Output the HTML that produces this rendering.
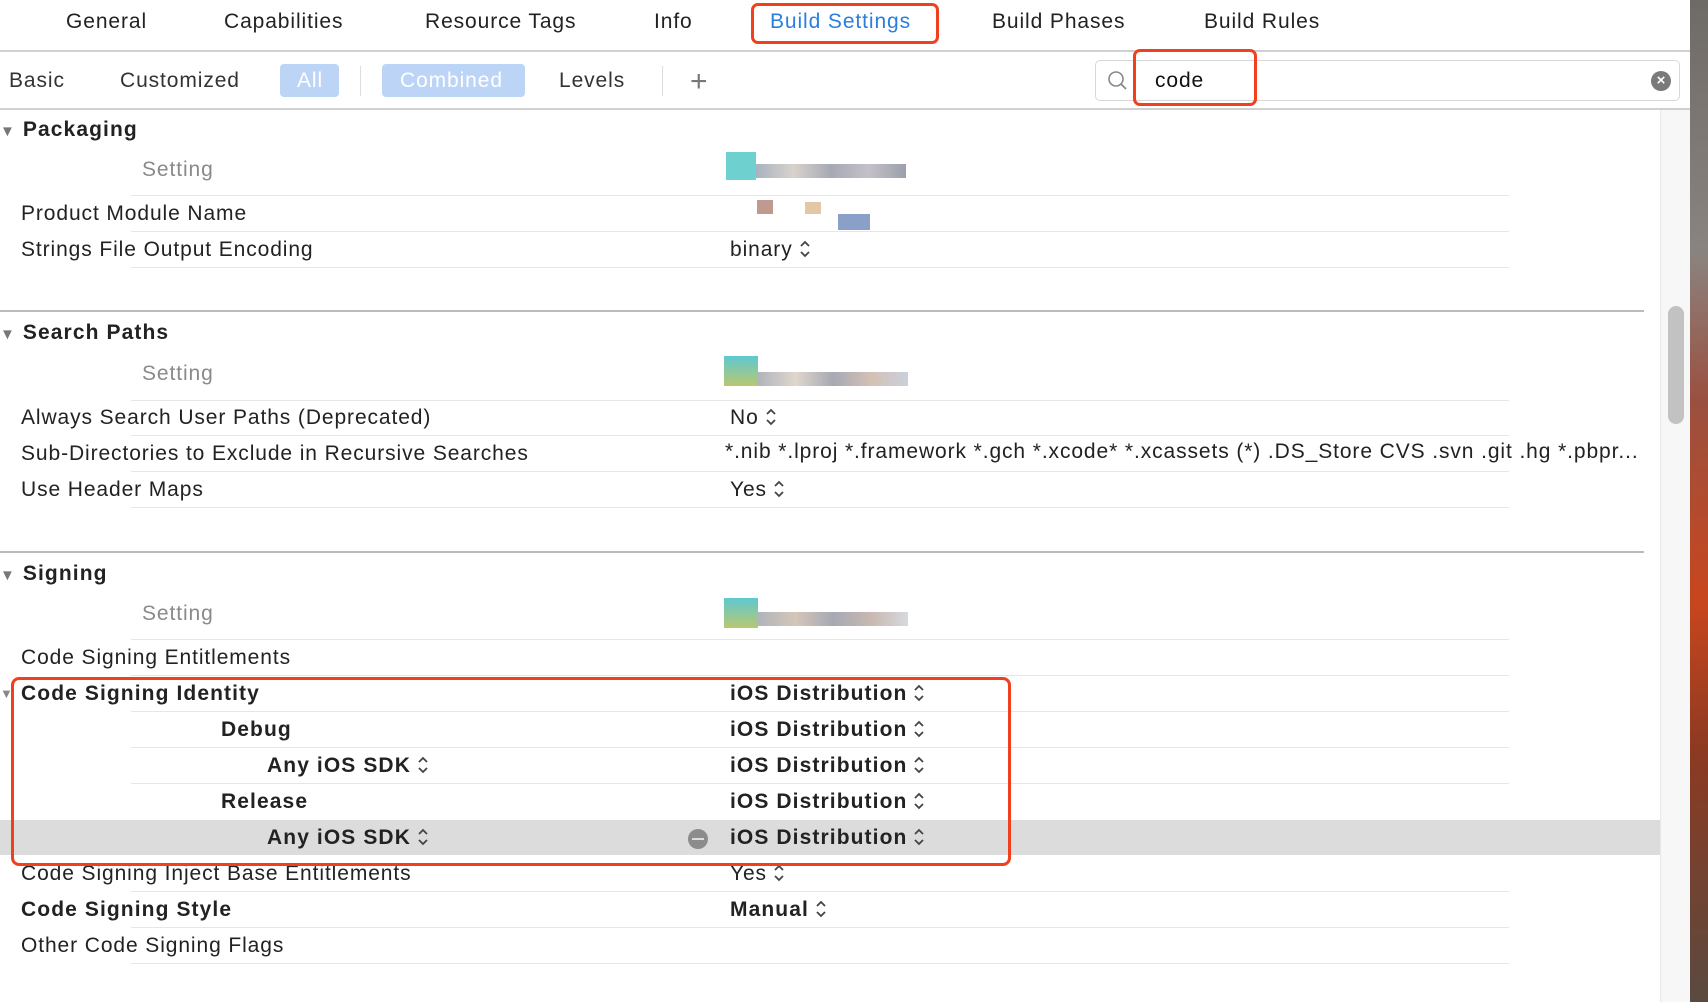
<!DOCTYPE html>
<html><head><meta charset="utf-8"><style>
*{margin:0;padding:0;box-sizing:border-box}
body{width:1708px;height:1002px;overflow:hidden;background:#fff;font-family:"Liberation Sans",sans-serif;color:#222;position:relative}
.a{position:absolute;white-space:nowrap}
.t{font-size:21px;line-height:24px;letter-spacing:0.9px}
.hl{position:absolute;height:1px;background:#e6e6e6}
.b{font-weight:bold;letter-spacing:1.1px}
.g{color:#8a8a8a}
.ud{display:inline-block;margin-left:6px;vertical-align:-3px}
.blk{position:absolute}
</style></head><body>
<svg width="0" height="0" style="position:absolute"><defs><symbol id="ud" viewBox="0 0 12 20"><path d="M2 7 L6 3 L10 7 M2 13 L6 17 L10 13" fill="none" stroke="#444" stroke-width="1.8"/></symbol></defs></svg>
<!-- tab bar -->
<div class="a t" style="left:66px;top:10px">General</div>
<div class="a t" style="left:224px;top:10px">Capabilities</div>
<div class="a t" style="left:425px;top:10px">Resource Tags</div>
<div class="a t" style="left:654px;top:10px">Info</div>
<div class="a t" style="left:770px;top:10px;color:#2a7ee0">Build Settings</div>
<div class="a t" style="left:992px;top:10px">Build Phases</div>
<div class="a t" style="left:1204px;top:10px">Build Rules</div>
<div class="a" style="left:751px;top:3px;width:188px;height:41px;border:3px solid #f0401e;border-radius:7px"></div>
<div class="hl" style="left:0;top:50px;width:1690px;height:2px;background:#d0d0d0"></div>
<!-- filter bar -->
<div class="a t" style="left:9px;top:69px;color:#333">Basic</div>
<div class="a t" style="left:120px;top:69px;color:#333">Customized</div>
<div class="a" style="left:280px;top:64px;width:59px;height:33px;background:#bcd5f7;border-radius:4px"></div>
<div class="a t" style="left:297px;top:69px;color:#fff">All</div>
<div class="a" style="left:360px;top:66px;width:1px;height:30px;background:#ddd"></div>
<div class="a" style="left:382px;top:64px;width:143px;height:33px;background:#bcd5f7;border-radius:4px"></div>
<div class="a t" style="left:400px;top:69px;color:#fff">Combined</div>
<div class="a t" style="left:559px;top:69px;color:#333">Levels</div>
<div class="a" style="left:662px;top:66px;width:1px;height:30px;background:#ddd"></div>
<div class="a" style="left:690px;top:70px;font-size:30px;line-height:24px;color:#777">+</div>
<div class="a" style="left:1095px;top:60px;width:585px;height:41px;border:1px solid #d8d8d8;border-radius:5px"></div>
<svg class="a" style="left:1107px;top:70px" width="24" height="22"><circle cx="9" cy="9" r="7" fill="none" stroke="#888" stroke-width="1.6"/><line x1="14" y1="14" x2="19" y2="19" stroke="#888" stroke-width="1.8"/></svg>
<div class="a t" style="left:1155px;top:69px;color:#111">code</div>
<div class="a" style="left:1651px;top:71px;width:20px;height:20px;border-radius:50%;background:#7a7a7a;color:#fff;font-size:15px;line-height:20px;text-align:center;font-weight:bold">×</div>
<div class="a" style="left:1133px;top:49px;width:124px;height:57px;border:3px solid #f0401e;border-radius:7px"></div>
<div class="hl" style="left:0;top:108px;width:1690px;height:2px;background:#d0d0d0"></div>
<!-- scrollbar + desktop -->
<div class="a" style="left:1660px;top:110px;width:30px;height:892px;background:#f7f7f7;border-left:1px solid #e8e8e8"></div>
<div class="a" style="left:1668px;top:306px;width:16px;height:118px;background:#c2c2c2;border-radius:8px"></div>
<div class="a" style="left:1690px;top:0;width:18px;height:1002px;background:linear-gradient(180deg,#6e6a66 0%,#8a8480 25%,#9a5040 40%,#c8461e 60%,#8c3a22 75%,#5a4a40 100%)"></div>

<!-- Packaging -->
<div class="a t b" style="left:0;top:118px;font-size:21px"><span style="color:#777;font-size:15px">▼</span> Packaging</div>
<div class="a t g" style="left:142px;top:158px">Setting</div>
<div class="blk" style="left:726px;top:152px;width:30px;height:28px;background:#6fd0d0"></div>
<div class="blk" style="left:756px;top:164px;width:150px;height:14px;background:linear-gradient(90deg,#a7b3c0,#d9d2cc,#a6a9b4,#c5c0c8,#9aa0aa)"></div>
<div class="hl" style="left:131px;top:195px;width:1378px"></div>
<div class="a t" style="left:21px;top:202px">Product Module Name</div>
<div class="blk" style="left:757px;top:200px;width:16px;height:14px;background:#c09a90"></div>
<div class="blk" style="left:805px;top:202px;width:16px;height:12px;background:#e4c7a6"></div>
<div class="blk" style="left:838px;top:214px;width:32px;height:16px;background:#8aa0c8"></div>
<div class="hl" style="left:131px;top:231px;width:1378px"></div>
<div class="a t" style="left:21px;top:238px">Strings File Output Encoding</div>
<div class="a t" style="left:730px;top:238px">binary<svg class="ud" width="12" height="20"><use href="#ud"/></svg></div>
<div class="hl" style="left:131px;top:267px;width:1378px"></div>
<div class="hl" style="left:0;top:310px;width:1644px;height:2px;background:#bbb"></div>

<!-- Search Paths -->
<div class="a t b" style="left:0;top:321px;font-size:21px"><span style="color:#777;font-size:15px">▼</span> Search Paths</div>
<div class="a t g" style="left:142px;top:362px">Setting</div>
<div class="blk" style="left:724px;top:356px;width:34px;height:30px;background:linear-gradient(180deg,#5fc8d0,#b9c870)"></div>
<div class="blk" style="left:758px;top:372px;width:150px;height:14px;background:linear-gradient(90deg,#b0b4bc,#e0d6cc,#a6a9b4,#d4c0b4,#c9d0dc)"></div>
<div class="hl" style="left:131px;top:400px;width:1378px"></div>
<div class="a t" style="left:21px;top:406px">Always Search User Paths (Deprecated)</div>
<div class="a t" style="left:730px;top:406px">No<svg class="ud" width="12" height="20"><use href="#ud"/></svg></div>
<div class="hl" style="left:131px;top:435px;width:1378px"></div>
<div class="a t" style="left:21px;top:442px">Sub-Directories to Exclude in Recursive Searches</div>
<div class="a t" style="left:725px;top:440px;letter-spacing:0.9px">*.nib *.lproj *.framework *.gch *.xcode* *.xcassets (*) .DS_Store CVS .svn .git .hg *.pbpr...</div>
<div class="hl" style="left:131px;top:471px;width:1378px"></div>
<div class="a t" style="left:21px;top:478px">Use Header Maps</div>
<div class="a t" style="left:730px;top:478px">Yes<svg class="ud" width="12" height="20"><use href="#ud"/></svg></div>
<div class="hl" style="left:131px;top:507px;width:1378px"></div>
<div class="hl" style="left:0;top:551px;width:1644px;height:2px;background:#bbb"></div>

<!-- Signing -->
<div class="a t b" style="left:0;top:562px;font-size:21px"><span style="color:#777;font-size:15px">▼</span> Signing</div>
<div class="a t g" style="left:142px;top:602px">Setting</div>
<div class="blk" style="left:724px;top:598px;width:34px;height:30px;background:linear-gradient(180deg,#5fc8d0,#b9c870)"></div>
<div class="blk" style="left:758px;top:612px;width:150px;height:14px;background:linear-gradient(90deg,#b0b4bc,#d4c6b8,#a6a9b4,#c8b8b0,#d8d8e0)"></div>
<div class="hl" style="left:131px;top:639px;width:1378px"></div>
<div class="a t" style="left:21px;top:646px">Code Signing Entitlements</div>
<div class="hl" style="left:131px;top:675px;width:1378px"></div>
<div class="a" style="left:0;top:686px;color:#888;font-size:13px">▼</div>
<div class="a t b" style="left:21px;top:682px">Code Signing Identity</div>
<div class="a t b" style="left:730px;top:682px">iOS Distribution<svg class="ud" width="12" height="20"><use href="#ud"/></svg></div>
<div class="hl" style="left:131px;top:711px;width:1378px"></div>
<div class="a t b" style="left:221px;top:718px">Debug</div>
<div class="a t b" style="left:730px;top:718px">iOS Distribution<svg class="ud" width="12" height="20"><use href="#ud"/></svg></div>
<div class="hl" style="left:131px;top:747px;width:1378px"></div>
<div class="a t b" style="left:267px;top:754px">Any iOS SDK<svg class="ud" width="12" height="20"><use href="#ud"/></svg></div>
<div class="a t b" style="left:730px;top:754px">iOS Distribution<svg class="ud" width="12" height="20"><use href="#ud"/></svg></div>
<div class="hl" style="left:131px;top:783px;width:1378px"></div>
<div class="a t b" style="left:221px;top:790px">Release</div>
<div class="a t b" style="left:730px;top:790px">iOS Distribution<svg class="ud" width="12" height="20"><use href="#ud"/></svg></div>
<div class="a" style="left:0;top:820px;width:1660px;height:35px;background:#dcdcdc"></div>
<div class="a t b" style="left:267px;top:826px">Any iOS SDK<svg class="ud" width="12" height="20"><use href="#ud"/></svg></div>
<div class="a" style="left:688px;top:829px;width:20px;height:20px;border-radius:50%;background:#8c8c8c"><div style="position:absolute;left:4px;top:9px;width:12px;height:2px;background:#ddd"></div></div>
<div class="a t b" style="left:730px;top:826px">iOS Distribution<svg class="ud" width="12" height="20"><use href="#ud"/></svg></div>
<div class="a t" style="left:21px;top:862px">Code Signing Inject Base Entitlements</div>
<div class="a t" style="left:730px;top:862px">Yes<svg class="ud" width="12" height="20"><use href="#ud"/></svg></div>
<div class="hl" style="left:131px;top:891px;width:1378px"></div>
<div class="a t b" style="left:21px;top:898px">Code Signing Style</div>
<div class="a t b" style="left:730px;top:898px">Manual<svg class="ud" width="12" height="20"><use href="#ud"/></svg></div>
<div class="hl" style="left:131px;top:927px;width:1378px"></div>
<div class="a t" style="left:21px;top:934px">Other Code Signing Flags</div>
<div class="hl" style="left:131px;top:963px;width:1378px"></div>
<div class="a" style="left:11px;top:677px;width:1000px;height:189px;border:3px solid #f0401e;border-radius:8px"></div>
</body></html>
